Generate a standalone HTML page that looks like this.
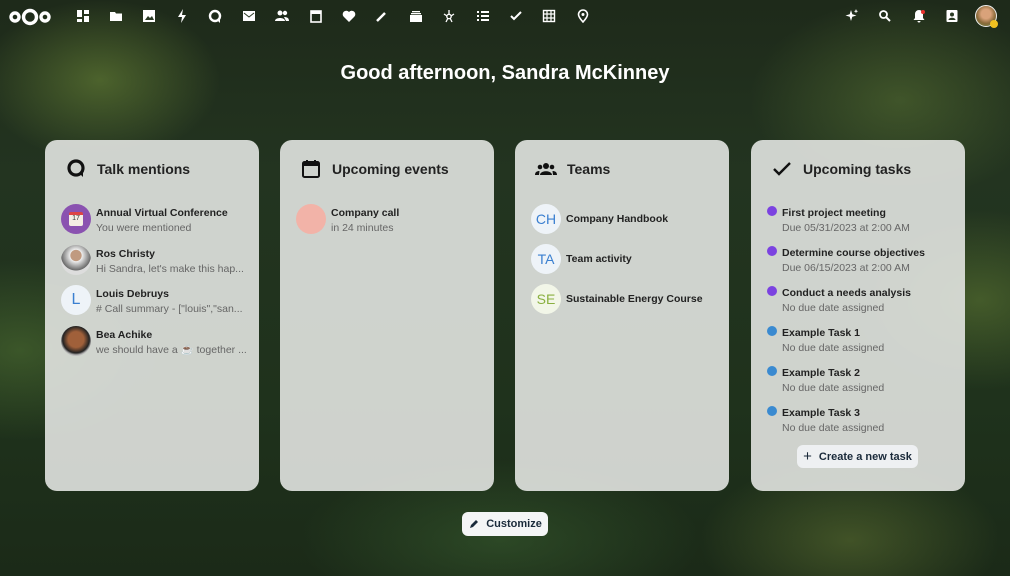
<!DOCTYPE html>
<html><head><meta charset="utf-8"><style>
*{box-sizing:border-box;margin:0;padding:0}
body{width:1010px;height:576px;overflow:hidden;font-family:"Liberation Sans",sans-serif;position:relative;
background:
radial-gradient(ellipse 120px 80px at 100px 80px,rgba(120,150,60,.5),transparent),
radial-gradient(ellipse 150px 100px at 900px 100px,rgba(110,140,60,.4),transparent),
radial-gradient(ellipse 130px 90px at 980px 300px,rgba(120,150,60,.4),transparent),
radial-gradient(ellipse 140px 90px at 20px 350px,rgba(100,140,60,.4),transparent),
radial-gradient(ellipse 200px 80px at 500px 540px,rgba(60,100,50,.5),transparent),
radial-gradient(ellipse 150px 80px at 850px 540px,rgba(120,140,60,.4),transparent),
linear-gradient(180deg,#1e2a1a 0%,#233420 30%,#1f321c 70%,#1b2a18 100%);}
.top{position:absolute;top:0;left:0;right:0;height:34px}
.ic{position:absolute;top:9px;width:14px;height:14px;color:#fff}
h1{position:absolute;top:62px;width:100%;text-align:center;color:#fff;font-size:20px;font-weight:bold}
.card{position:absolute;top:140px;width:214px;height:351px;border-radius:12px;background:rgba(226,228,225,.9)}
.ct{position:absolute;top:21px;left:52px;font-size:14px;font-weight:bold;color:#222}
.hi{position:absolute;left:20px;top:18px;width:22px;height:22px}
.av{position:absolute;left:16px;width:30px;height:30px;border-radius:50%}
.tx{position:absolute;left:51px;font-size:10.5px;line-height:15px}
.tx b{display:block;color:#222}
.tx span{display:block;color:#666;white-space:nowrap}
.dot{position:absolute;left:16px;width:10px;height:10px;border-radius:50%}
.btn{position:absolute;background:#f4f5f6;border-radius:6px;font-size:11px;font-weight:bold;color:#1a2a3a;display:flex;align-items:center;justify-content:center}
</style></head><body>
<div class="top">
<svg style="position:absolute;left:9px;top:7px" width="42" height="20" viewBox="0 0 42 20"><g fill="none" stroke="#fff" stroke-width="3.4"><circle cx="21" cy="10" r="6.5"/><circle cx="6" cy="10" r="4"/><circle cx="36" cy="10" r="4"/></g></svg>
<svg class="ic" style="left:76px" viewBox="0 0 14 14" fill="#fff"><rect x="1" y="1" width="5" height="7"/><rect x="8" y="1" width="5" height="4"/><rect x="8" y="7" width="5" height="6"/><rect x="1" y="10" width="5" height="3"/></svg>
<svg class="ic" style="left:109px" viewBox="0 0 14 14" fill="#fff"><path d="M1 3h5l1 1.5h6V12H1z"/></svg>
<svg class="ic" style="left:142px" viewBox="0 0 14 14"><rect x="1" y="1" width="12" height="12" fill="#fff"/><path d="M3 11l3-4 2 2 2-2 2 4z" fill="#2a3a24"/></svg>
<svg class="ic" style="left:175px" viewBox="0 0 14 14" fill="#fff"><path d="M8 0L3 8h4l-1 6 5-8H7z"/></svg>
<svg class="ic" style="left:208px" viewBox="0 0 14 14"><circle cx="7" cy="7" r="5" fill="none" stroke="#fff" stroke-width="2.4"/><path d="M9 11l3 3 0-4z" fill="#fff"/></svg>
<svg class="ic" style="left:242px" viewBox="0 0 14 14"><rect x="1" y="2" width="12" height="10" fill="#fff"/><path d="M2 4l5 4 5-4" fill="none" stroke="#2a3a24"/></svg>
<svg class="ic" style="left:275px" viewBox="0 0 14 14" fill="#fff"><circle cx="5" cy="4" r="2.5"/><circle cx="10" cy="4" r="2.2"/><path d="M0 12c0-4 10-4 10 0zM9 8c3 0 5 1 5 4h-3z"/></svg>
<svg class="ic" style="left:309px" viewBox="0 0 14 14"><rect x="2" y="2" width="10" height="11" fill="none" stroke="#fff" stroke-width="1.6"/><rect x="2" y="2" width="10" height="3" fill="#fff"/></svg>
<svg class="ic" style="left:342px" viewBox="0 0 14 14" fill="#fff"><path d="M7 13L1.5 7.5A3.2 3.2 0 017 3a3.2 3.2 0 015.5 4.5z"/></svg>
<svg class="ic" style="left:375px" viewBox="0 0 14 14"><path d="M2 12l8-8" stroke="#fff" stroke-width="2.5"/></svg>
<svg class="ic" style="left:409px" viewBox="0 0 14 14" fill="#fff"><rect x="1" y="6" width="12" height="7"/><rect x="2" y="4" width="10" height="1.3"/><rect x="3" y="2" width="8" height="1.3"/></svg>
<svg class="ic" style="left:442px" viewBox="0 0 14 14" fill="none" stroke="#fff" stroke-width="1.3"><path d="M7 1v4M2 5l3 2M12 5l-3 2M4 13l2-4M10 13l-2-4"/><circle cx="7" cy="7.5" r="2.2"/></svg>
<svg class="ic" style="left:476px" viewBox="0 0 14 14" fill="#fff"><rect x="1" y="2" width="2" height="2"/><rect x="5" y="2" width="8" height="2"/><rect x="1" y="6" width="2" height="2"/><rect x="5" y="6" width="8" height="2"/><rect x="1" y="10" width="2" height="2"/><rect x="5" y="10" width="8" height="2"/></svg>
<svg class="ic" style="left:509px" viewBox="0 0 14 14"><path d="M2 7l3 3 7-7" fill="none" stroke="#fff" stroke-width="2"/></svg>
<svg class="ic" style="left:542px" viewBox="0 0 14 14"><rect x="1.5" y="1.5" width="11" height="11" fill="none" stroke="#fff" stroke-width="1.4"/><path d="M1 5h12M1 9h12M5 1v12M9 1v12" stroke="#fff" stroke-width="1.2"/></svg>
<svg class="ic" style="left:576px" viewBox="0 0 14 14"><path d="M7 13S2.5 8 2.5 5.5a4.5 4.5 0 019 0C11.5 8 7 13 7 13z" fill="none" stroke="#fff" stroke-width="1.6"/><circle cx="7" cy="5.5" r="1.5" fill="#fff"/></svg>
<svg class="ic" style="left:845px" viewBox="0 0 14 14" fill="#fff"><path d="M6 1l1.3 4.2L11.5 6.5 7.3 7.8 6 12 4.7 7.8.5 6.5l4.2-1.3z"/><path d="M11 0l.6 1.6 1.6.6-1.6.6L11 4.4l-.6-1.6-1.6-.6 1.6-.6z"/></svg>
<svg class="ic" style="left:878px" viewBox="0 0 14 14"><circle cx="5.5" cy="5.5" r="3.5" fill="none" stroke="#fff" stroke-width="1.8"/><path d="M8 8l4 4" stroke="#fff" stroke-width="2"/></svg>
<svg class="ic" style="left:912px" viewBox="0 0 14 14" fill="#fff"><path d="M7 1a4 4 0 00-4 4v4l-1.5 2h11L11 9V5a4 4 0 00-4-4zM5.5 12a1.5 1.5 0 003 0z"/><circle cx="11" cy="3" r="2" fill="#e9322d"/></svg>
<svg class="ic" style="left:945px" viewBox="0 0 14 14"><rect x="1.5" y="1" width="11" height="12" rx="1" fill="#fff"/><circle cx="7" cy="5.5" r="2" fill="#2a3a24"/><path d="M3.5 11c0-3 7-3 7 0z" fill="#2a3a24"/></svg>
<div style="position:absolute;left:975px;top:5px;width:22px;height:22px;border-radius:50%;background:radial-gradient(circle at 50% 40%,#d9a27a 30%,#8a6a3a 60%,#6a8a4a);border:1px solid #eee"></div>
<div style="position:absolute;left:990px;top:20px;width:8px;height:8px;border-radius:50%;background:#f0c020"></div>
</div>
<h1>Good afternoon, Sandra McKinney</h1>

<div class="card" style="left:45px">
<svg class="hi" viewBox="0 0 22 22"><circle cx="11" cy="10" r="7" fill="none" stroke="#111" stroke-width="3.2"/><path d="M14 15l4 4v-6z" fill="#111"/></svg>
<div class="ct" style="left:52px">Talk mentions</div>
<div class="av" style="top:64px;background:#8a52b0"><div style="position:absolute;left:8px;top:8px;width:14px;height:14px;background:#f4eee4;border-top:3px solid #d44;border-radius:2px;font-size:7px;text-align:center;color:#333">17</div></div>
<div class="tx" style="top:66px"><b>Annual Virtual Conference</b><span>You were mentioned</span></div>
<div class="av" style="top:105px;background:radial-gradient(circle at 50% 35%,#c09a80 22%,#eee 24%,#6a6a6a 60%,#ddd 62%)"></div>
<div class="tx" style="top:107px"><b>Ros Christy</b><span>Hi Sandra, let's make this hap...</span></div>
<div class="av" style="top:145px;background:#eef3f8;color:#3a7fd0;font-size:16px;text-align:center;line-height:30px">L</div>
<div class="tx" style="top:147px"><b>Louis Debruys</b><span># Call summary - ["louis","san...</span></div>
<div class="av" style="top:186px;background:radial-gradient(circle at 50% 45%,#a0603a 35%,#222 60%,#bbb 70%)"></div>
<div class="tx" style="top:188px"><b>Bea Achike</b><span>we should have a ☕ together ...</span></div>
</div>

<div class="card" style="left:280px">
<svg class="hi" viewBox="0 0 22 22"><rect x="3" y="4" width="16" height="15" rx="1.5" fill="none" stroke="#111" stroke-width="2"/><rect x="3" y="4" width="16" height="4" fill="#111"/><path d="M7 2v4M15 2v4" stroke="#111" stroke-width="2"/></svg>
<div class="ct">Upcoming events</div>
<div class="av" style="top:64px;background:#f2b3a8"></div>
<div class="tx" style="top:66px"><b>Company call</b><span>in 24 minutes</span></div>
</div>

<div class="card" style="left:515px">
<svg class="hi" viewBox="0 0 22 22" fill="#111"><circle cx="11" cy="8" r="3"/><circle cx="5" cy="9" r="2.3"/><circle cx="17" cy="9" r="2.3"/><path d="M5 17c0-5 12-5 12 0zM0 17c0-3 2-4 4.5-4L4 17zM22 17c0-3-2-4-4.5-4l.5 4z"/></svg>
<div class="ct">Teams</div>
<div class="av" style="top:64px;background:#eef3f8;color:#3a7fd0;font-size:14px;text-align:center;line-height:30px">CH</div>
<div class="tx" style="top:72px"><b>Company Handbook</b></div>
<div class="av" style="top:104px;background:#eef3f8;color:#3a7fd0;font-size:14px;text-align:center;line-height:30px">TA</div>
<div class="tx" style="top:112px"><b>Team activity</b></div>
<div class="av" style="top:144px;background:#f2f6e8;color:#8ab040;font-size:14px;text-align:center;line-height:30px">SE</div>
<div class="tx" style="top:152px"><b>Sustainable Energy Course</b></div>
</div>

<div class="card" style="left:751px">
<svg class="hi" viewBox="0 0 22 22"><path d="M3 11l5 5L19 5" fill="none" stroke="#111" stroke-width="2.4"/></svg>
<div class="ct">Upcoming tasks</div>
<div class="dot" style="top:66px;background:#7b42e0"></div><div class="tx" style="top:66px;left:31px"><b>First project meeting</b><span>Due 05/31/2023 at 2:00 AM</span></div>
<div class="dot" style="top:106px;background:#7b42e0"></div><div class="tx" style="top:106px;left:31px"><b>Determine course objectives</b><span>Due 06/15/2023 at 2:00 AM</span></div>
<div class="dot" style="top:146px;background:#7b42e0"></div><div class="tx" style="top:146px;left:31px"><b>Conduct a needs analysis</b><span>No due date assigned</span></div>
<div class="dot" style="top:186px;background:#3a8ad0"></div><div class="tx" style="top:186px;left:31px"><b>Example Task 1</b><span>No due date assigned</span></div>
<div class="dot" style="top:226px;background:#3a8ad0"></div><div class="tx" style="top:226px;left:31px"><b>Example Task 2</b><span>No due date assigned</span></div>
<div class="dot" style="top:266px;background:#3a8ad0"></div><div class="tx" style="top:266px;left:31px"><b>Example Task 3</b><span>No due date assigned</span></div>
<div class="btn" style="left:46px;top:305px;width:121px;height:23px;background:#eef0f2"><span style="font-size:15px;margin-right:7px;font-weight:normal">+</span>Create a new task</div>
</div>

<div class="btn" style="left:462px;top:512px;width:86px;height:24px"><svg width="12" height="12" viewBox="0 0 12 12" style="margin-right:6px"><path d="M2 10l1-3 5-5 2 2-5 5z" fill="#1a2a3a"/></svg>Customize</div>
</body></html>
